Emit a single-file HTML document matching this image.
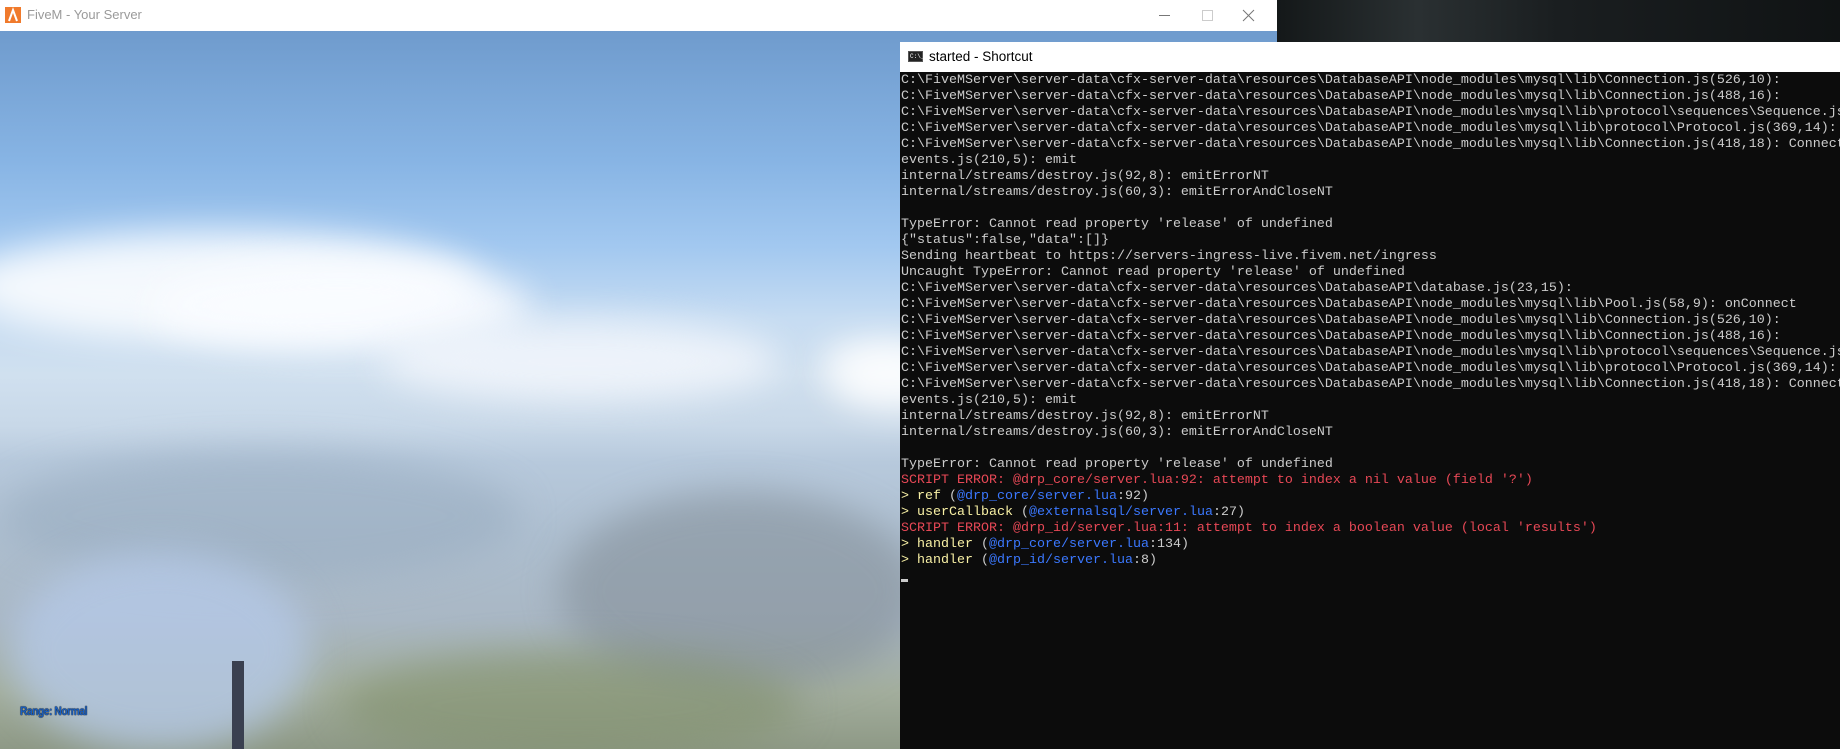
<!DOCTYPE html>
<html><head><meta charset="utf-8"><style>
*{margin:0;padding:0;box-sizing:border-box}
body{width:1840px;height:749px;overflow:hidden;position:relative;background:#15191b;font-family:"Liberation Sans",sans-serif}
#space{position:absolute;left:1277px;top:0;width:563px;height:42px;background:linear-gradient(90deg,#141819,#2a3032 25%,#1a1e20 50%,#101314);}
#fivem{position:absolute;left:0;top:0;width:1277px;height:749px;background:#fff}
#ftitle{height:31px;background:#fff;position:relative}
#ficon{position:absolute;left:5px;top:7px;width:16px;height:16px;background:#f07a2c}
#ftitle .t{position:absolute;left:27px;top:7px;font-size:13px;color:#9a9a9a}
#game{position:absolute;left:0;top:31px;width:1277px;height:718px;overflow:hidden;
background:linear-gradient(180deg,#6f9bcd 0%,#87b4e4 18%,#a2c8f0 30%,#c6dcf2 40%,#d0e0ef 48%,#c8d8e8 55%,#b7c9dc 60%,#aebfd0 70%,#a9b7c4 82%,#a3ae9d 92%,#8e9986 100%)}
.blob{position:absolute;border-radius:50%;filter:blur(18px)}
#console{position:absolute;left:900px;top:42px;width:940px;height:707px;background:#0c0c0c;overflow:hidden}
#ctitle{height:30px;background:#fff;position:relative}
#cicon{position:absolute;left:8px;top:9px;width:15px;height:11px;background:#222;border:1px solid #555}
#cicon span{position:absolute;left:1px;top:1px;font:6px "Liberation Mono",monospace;color:#fff;line-height:7px}
#ctitle .t{position:absolute;left:29px;top:7px;font-size:13.5px;color:#000}
pre{position:absolute;left:1px;top:31px;font:13.33px/16px "Liberation Mono",monospace;color:#cccccc;white-space:pre}
.r{color:#e74856}.y{color:#f9f1a5}.b{color:#3b78ff}
#range{position:absolute;left:20px;top:704px;font:bold 12px "Liberation Sans",sans-serif;color:#1a5fc0;letter-spacing:-0.5px;transform:scaleX(0.85);transform-origin:left;text-shadow:0 0 1px #000,0 0 1px #000}
</style></head><body>
<div id="space"></div>
<div id="fivem">
 <div id="ftitle"><div id="ficon"><svg width="16" height="16"><path d="M4 14 L8 3 L12 14" stroke="#fff" stroke-width="2" fill="none"/></svg></div><span class="t">FiveM - Your Server</span>
 <svg style="position:absolute;left:1155px;top:8px" width="110" height="16"><path d="M4 7.5H15" stroke="#777" stroke-width="1"/><rect x="47.5" y="2.5" width="10" height="10" fill="none" stroke="#ccc"/><path d="M88 2L99 13M99 2L88 13" stroke="#777" stroke-width="1"/></svg></div>
 <div id="game">
  <div class="blob" style="left:-40px;top:200px;width:520px;height:110px;background:rgba(255,255,255,.85)"></div>
  <div class="blob" style="left:150px;top:230px;width:380px;height:90px;background:rgba(250,252,255,.9)"></div>
  <div class="blob" style="left:380px;top:290px;width:400px;height:80px;background:rgba(245,248,252,.8)"></div>
  <div class="blob" style="left:820px;top:310px;width:120px;height:45px;background:rgba(255,255,255,.8)"></div>
  <div class="blob" style="left:830px;top:320px;width:140px;height:60px;background:rgba(255,255,255,.8)"></div>
  <div class="blob" style="left:0;top:420px;width:520px;height:130px;background:rgba(150,170,190,.5)"></div>
  <div class="blob" style="left:10px;top:520px;width:300px;height:200px;background:rgba(180,200,230,.8)"></div>
  <div class="blob" style="left:560px;top:460px;width:360px;height:200px;background:rgba(130,140,150,.55)"></div>
  <div class="blob" style="left:340px;top:620px;width:460px;height:110px;background:rgba(130,145,110,.6)"></div>
  <div style="position:absolute;left:232px;top:630px;width:12px;height:88px;background:#3a4050"></div>
 </div>
 <div id="range">Range: Normal</div>
</div>
<div id="console">
 <div id="ctitle"><div id="cicon"><span>C:\_</span></div><span class="t">started - Shortcut</span></div>
<pre>C:\FiveMServer\server-data\cfx-server-data\resources\DatabaseAPI\node_modules\mysql\lib\Connection.js(526,10):
C:\FiveMServer\server-data\cfx-server-data\resources\DatabaseAPI\node_modules\mysql\lib\Connection.js(488,16):
C:\FiveMServer\server-data\cfx-server-data\resources\DatabaseAPI\node_modules\mysql\lib\protocol\sequences\Sequence.js
C:\FiveMServer\server-data\cfx-server-data\resources\DatabaseAPI\node_modules\mysql\lib\protocol\Protocol.js(369,14):
C:\FiveMServer\server-data\cfx-server-data\resources\DatabaseAPI\node_modules\mysql\lib\Connection.js(418,18): Connection
events.js(210,5): emit
internal/streams/destroy.js(92,8): emitErrorNT
internal/streams/destroy.js(60,3): emitErrorAndCloseNT

TypeError: Cannot read property 'release' of undefined
{"status":false,"data":[]}
Sending heartbeat to https://servers-ingress-live.fivem.net/ingress
Uncaught TypeError: Cannot read property 'release' of undefined
C:\FiveMServer\server-data\cfx-server-data\resources\DatabaseAPI\database.js(23,15):
C:\FiveMServer\server-data\cfx-server-data\resources\DatabaseAPI\node_modules\mysql\lib\Pool.js(58,9): onConnect
C:\FiveMServer\server-data\cfx-server-data\resources\DatabaseAPI\node_modules\mysql\lib\Connection.js(526,10):
C:\FiveMServer\server-data\cfx-server-data\resources\DatabaseAPI\node_modules\mysql\lib\Connection.js(488,16):
C:\FiveMServer\server-data\cfx-server-data\resources\DatabaseAPI\node_modules\mysql\lib\protocol\sequences\Sequence.js
C:\FiveMServer\server-data\cfx-server-data\resources\DatabaseAPI\node_modules\mysql\lib\protocol\Protocol.js(369,14):
C:\FiveMServer\server-data\cfx-server-data\resources\DatabaseAPI\node_modules\mysql\lib\Connection.js(418,18): Connection
events.js(210,5): emit
internal/streams/destroy.js(92,8): emitErrorNT
internal/streams/destroy.js(60,3): emitErrorAndCloseNT

TypeError: Cannot read property 'release' of undefined
<span class="r">SCRIPT ERROR: @drp_core/server.lua:92: attempt to index a nil value (field '?')</span>
<span class="y">&gt; ref</span> (<span class="b">@drp_core/server.lua</span>:92)
<span class="y">&gt; userCallback</span> (<span class="b">@externalsql/server.lua</span>:27)
<span class="r">SCRIPT ERROR: @drp_id/server.lua:11: attempt to index a boolean value (local 'results')</span>
<span class="y">&gt; handler</span> (<span class="b">@drp_core/server.lua</span>:134)
<span class="y">&gt; handler</span> (<span class="b">@drp_id/server.lua</span>:8)
<span style="display:inline-block;width:7px;height:3px;background:#ccc;vertical-align:-3px"></span></pre>
</div>
</body></html>
